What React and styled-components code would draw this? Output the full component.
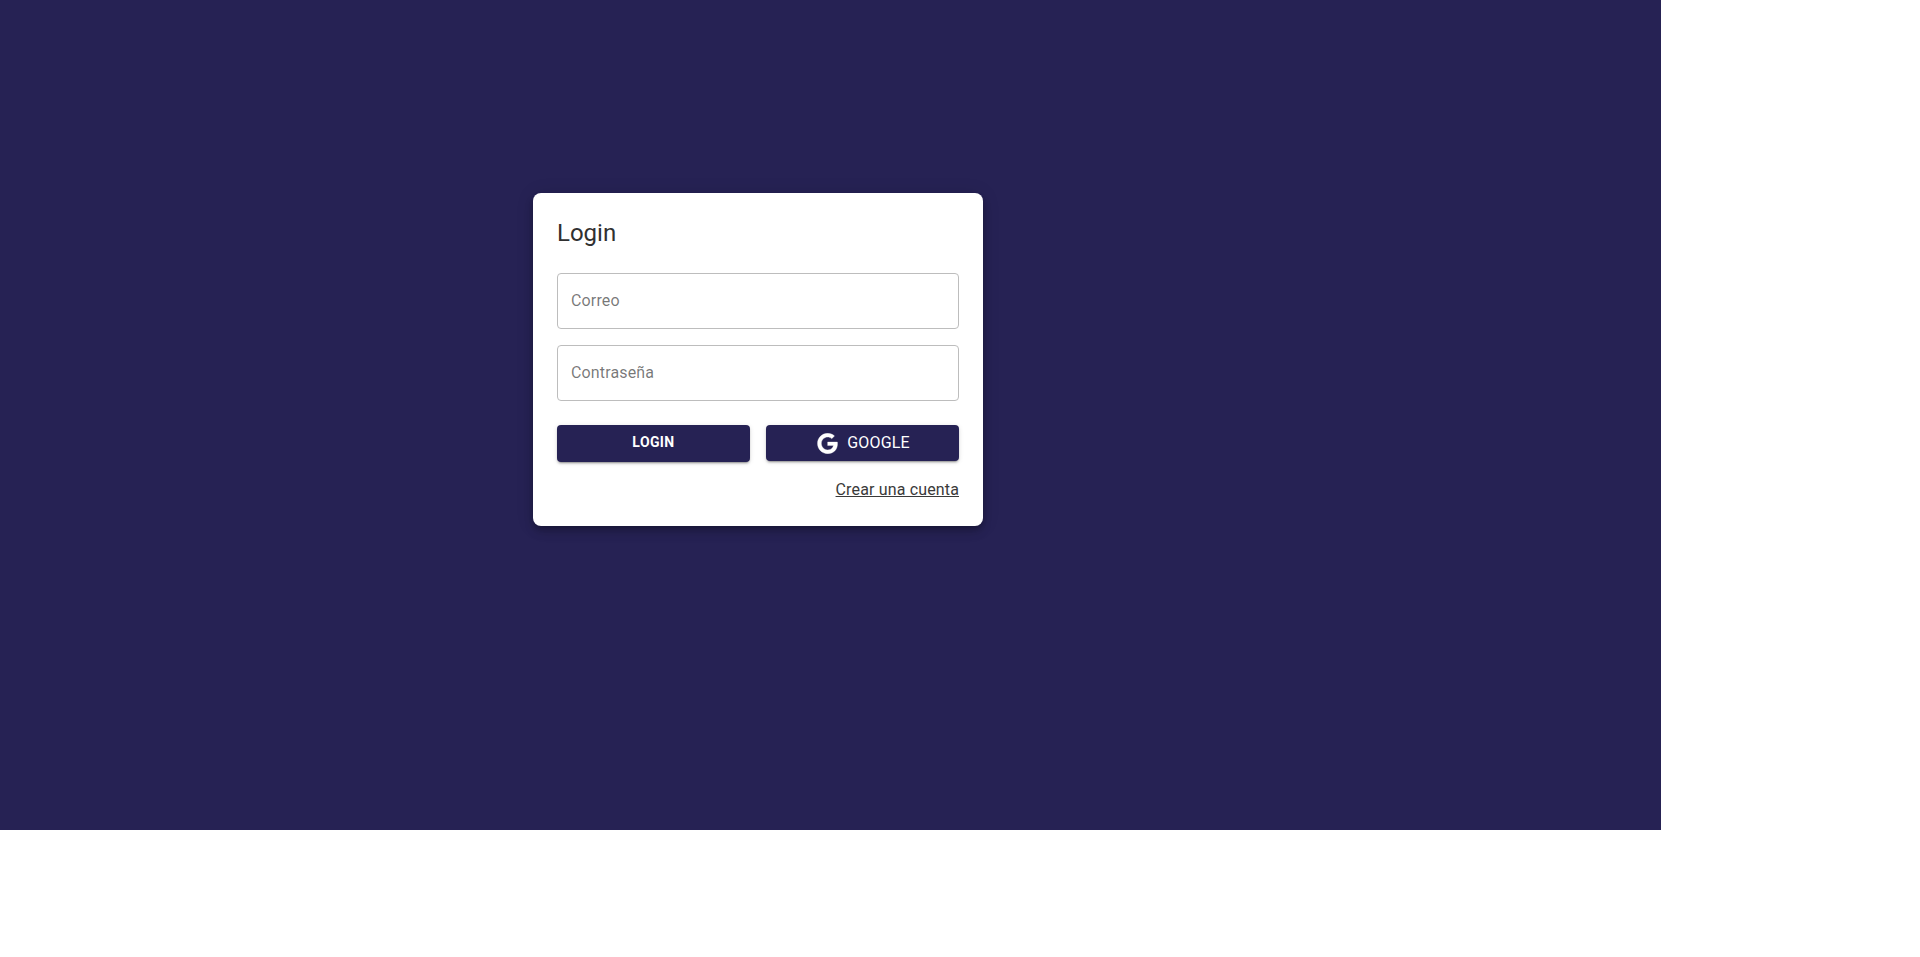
import React from 'react';
import styled, { createGlobalStyle } from 'styled-components';
import { FaGoogle } from 'react-icons/fa';

const GlobalStyle = createGlobalStyle`
  html, body {
    margin: 0;
    background: #fff;
    font-family: Roboto, "Noto Sans", sans-serif;
  }
`;

const raisedShadow = '0 3px 1px -2px rgba(0,0,0,.2), 0 2px 2px 0 rgba(0,0,0,.14), 0 1px 5px 0 rgba(0,0,0,.12)';

const Screen = styled.main`
  width: 1661px;
  height: 830px;
  padding: 193px 0 0 533px;
  box-sizing: border-box;
  background: #262254;
`;

const Card = styled.form`
  width: 450px;
  height: 333px;
  padding: 24px;
  box-sizing: border-box;
  background: #fff;
  border-radius: 8px;
  box-shadow: 0 3px 5px -1px rgba(0,0,0,.2), 0 6px 10px 0 rgba(0,0,0,.14), 0 1px 18px 0 rgba(0,0,0,.12);
`;

const Title = styled.h1`
  margin: 0 0 24px;
  font-size: 24px;
  font-weight: 400;
  line-height: 32px;
  color: #303030;
`;

const Input = styled.input`
  display: block;
  width: 100%;
  height: 56px;
  margin-bottom: 16px;
  padding: 0 13px 2px;
  box-sizing: border-box;
  border: 1px solid #bdbdbd;
  border-radius: 4px;
  outline: none;
  background: #fff;
  font: 400 16px Roboto, sans-serif;
  letter-spacing: 0.15px;
  color: rgba(0,0,0,.87);

  &::placeholder {
    color: rgba(0,0,0,.54);
    opacity: 1;
  }
`;

const Buttons = styled.div`
  display: grid;
  grid-template-columns: 1fr 1fr;
  gap: 16px;
  align-items: start;
  margin-top: 24px;
`;

const Button = styled.button`
  display: flex;
  align-items: center;
  justify-content: center;
  gap: 10px;
  height: ${({ $tall }) => ($tall ? '37px' : '36px')};
  padding: ${({ $tall }) => ($tall ? '0 16px 3px' : '0 16px 2px 17px')};
  border: none;
  border-radius: 4px;
  background: #262254;
  box-shadow: ${raisedShadow};
  color: #fff;
  font-family: Roboto, sans-serif;
  font-size: ${({ $tall }) => ($tall ? '14px' : '16px')};
  font-weight: ${({ $tall }) => ($tall ? 700 : 400)};
  letter-spacing: ${({ $tall }) => ($tall ? '0.4px' : '0.2px')};
  text-transform: uppercase;
`;

const GoogleIcon = styled(FaGoogle)`
  width: 21px;
  height: 21px;
  margin: 2px -1px 0 1px;
  stroke: currentColor;
  stroke-width: 8px;
`;

const Footer = styled.div`
  display: flex;
  justify-content: flex-end;
  margin-top: 16px;
`;

const CreateLink = styled.a`
  font-size: 16px;
  line-height: 24px;
  letter-spacing: 0.15px;
  color: #3a3a3a;
  text-decoration: underline;
`;

export default function App() {
  return (
    <>
      <GlobalStyle />
      <Screen>
        <Card>
          <Title>Login</Title>
          <Input type="email" placeholder="Correo" />
          <Input type="password" placeholder="Contraseña" />
          <Buttons>
            <Button type="submit" $tall>Login</Button>
            <Button type="button">
              <GoogleIcon />
              Google
            </Button>
          </Buttons>
          <Footer>
            <CreateLink href="#">Crear una cuenta</CreateLink>
          </Footer>
        </Card>
      </Screen>
    </>
  );
}
